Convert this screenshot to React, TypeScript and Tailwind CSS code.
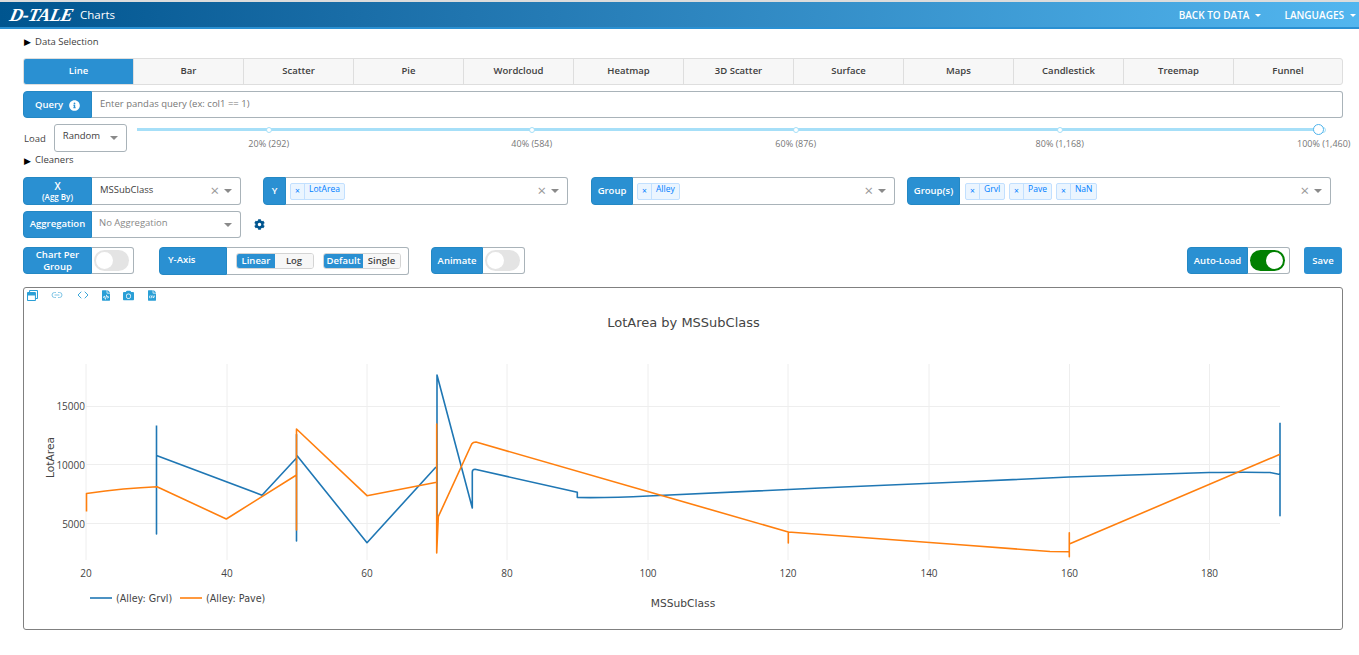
import React from "react";
import { FaCamera, FaCog, FaFileCode, FaFileCsv, FaInfoCircle, FaRegWindowRestore } from "react-icons/fa";
import { Code, Link2 } from "lucide-react";

const TABS = ["Line", "Bar", "Scatter", "Pie", "Wordcloud", "Heatmap", "3D Scatter", "Surface", "Maps", "Candlestick", "Treemap", "Funnel"];

const Caret = () => <span className="ml-[5px] h-0 w-0 border-x-[4px] border-t-[4px] border-x-transparent border-t-[#8a8a8a]" />;
const Clear = () => <span className="-mt-[2px] text-[15px] leading-none text-[#999]">×</span>;
const Label = ({ children, w, c = "pb-[1px]" }: { children: React.ReactNode; w: string; c?: string }) => (
  <div className={`${w} ${c} flex shrink-0 flex-col items-center justify-center rounded-l-[4px] border border-[#2488c4] bg-[#2a90d2] text-center text-[9.5px] font-semibold leading-[12px] text-white`}>{children}</div>
);
const Tag = ({ t }: { t: string }) => (
  <span className="flex h-[17px] items-center rounded-[2px] border border-[#c2e0ff] bg-[#ebf5ff] text-[8.5px] text-[#007eff]">
    <span className="flex h-full w-[14px] items-center justify-center border-r border-[#c2e0ff]">×</span>
    <span className="px-[4px] pb-[3px]">{t}</span>
  </span>
);
const Switch = ({ on }: { on?: boolean }) => (
  <div className={`flex h-[21px] w-[35px] items-center rounded-full ${on ? "justify-end bg-[#008000]" : "justify-start bg-[#e4e4e4]"} p-[2px]`}>
    <div className="h-[17px] w-[17px] rounded-full bg-white" />
  </div>
);
const Toggle = ({ items }: { items: string[] }) => (
  <div className="flex h-[16px] overflow-hidden rounded-[3px] border border-[#d4d4d4] text-[9.5px] font-semibold">
    {items.map((t, i) => (
      <span key={t} className={`flex items-center justify-center ${t === "Linear" ? "w-[38px]" : t === "Log" ? "w-[38px]" : t === "Default" ? "w-[39px]" : "w-[37px]"} ${i === 0 ? "bg-[#2a90d2] text-white" : "bg-[#f7f7f7] text-[#444]"}`}>{t}</span>
    ))}
  </div>
);

const Chart = () => {
  const xt = [[20, 86], [40, 227], [60, 367], [80, 507], [100, 648], [120, 788], [140, 929], [160, 1069.5], [180, 1209.5]];
  const f = "'DejaVu Sans', sans-serif";
  const n = "'Open Sans', sans-serif";
  return (
    <svg viewBox="23 287 1320 343" className="block h-[343px] w-[1320px]" style={{ fontFamily: f }}>
      {xt.map(([, x]) => <line key={x} x1={x} x2={x} y1={364} y2={560} stroke="#eeeeee" />)}
      {[406.5, 464.5, 523.5].map(y => <line key={y} x1={86} x2={1280} y1={y} y2={y} stroke="#eeeeee" />)}
      <path fill="none" stroke="#1f77b4" strokeWidth="1.6" strokeLinejoin="round" d="M156.5 425.5V534V455.5L262 495.2L296.5 458V434.5V541V455L367 542.7L436 467M437 540V375L472.3 508V472Q472.3 469.3 475 469.3L577.3 492.3V497.5Q610 498 648 496L820 488L960 482L1069 477L1209 472.5Q1250 472 1270 472.5L1280 474.5V515.7V422.7" />
      <path fill="none" stroke="#ff7f0e" strokeWidth="1.6" strokeLinejoin="round" d="M86.5 511.5V493.5Q125 488 157 486.7L226.3 519L296.5 475V530V429L367 495.7L436.7 482.3V424V553L438.3 516.7L471.7 444Q473 442 476 442L788.3 532V543V532L960 544.7L1050 551.5L1069.3 551.7V532.7V556.7V544L1280 454.3" />
      <text x={683.5} y={327} textAnchor="middle" fontSize="13" fill="#444">LotArea by MSSubClass</text>
      <g fontSize="10" fill="#444" style={{ fontFamily: n }}>
        {xt.map(([v, x]) => <text key={v} x={x} y={577} textAnchor="middle">{v}</text>)}
        <text x={85} y={410} textAnchor="end">15000</text>
        <text x={85} y={468.5} textAnchor="end">10000</text>
        <text x={85} y={527.5} textAnchor="end">5000</text>
      </g>
      <g fontSize="9.6" fill="#444">
        <text x={116} y={602}>(Alley: Grvl)</text>
        <text x={206} y={602}>(Alley: Pave)</text>
        <text transform="translate(54 457.5) rotate(-90)" textAnchor="middle" fontSize="10.7">LotArea</text>
        <text x={683} y={607} textAnchor="middle" fontSize="10.7">MSSubClass</text>
      </g>
      <line x1={90} x2={112} y1={598} y2={598} stroke="#1f77b4" strokeWidth="1.6" />
      <line x1={180} x2={202} y1={598} y2={598} stroke="#ff7f0e" strokeWidth="1.6" />
    </svg>
  );
};

export default function App() {
  return (
    <div className="h-[655px] w-[1359px] overflow-hidden bg-white text-[9.5px] text-[#404040]" style={{ fontFamily: "'Open Sans', sans-serif" }}>
      <div className="flex h-[29px] items-center border-b-[2px] border-t-[2px] border-b-[#2a90d2] border-t-[#dcdcdc] bg-gradient-to-r from-[#00558f] to-[#52b6ef] pl-[10px] pt-[1px] text-white">
        <span className="mr-[8px] w-[62px] -skew-x-12 whitespace-nowrap text-[18.5px] font-bold italic leading-none tracking-[-0.5px]" style={{ fontFamily: "'Liberation Serif', serif" }}>D-TALE</span>
        <span className="text-[11.5px]">Charts</span>
        <div className="ml-auto flex items-center pr-[3px] text-[10px] font-semibold">
          <span>BACK TO DATA</span>
          <span className="ml-[6px] h-0 w-0 border-x-[3px] border-t-[3px] border-x-transparent border-t-white" />
          <span className="ml-[23px]">LANGUAGES</span>
          <span className="ml-[6px] h-0 w-0 border-x-[3px] border-t-[3px] border-x-transparent border-t-white" />
        </div>
      </div>

      <div className="flex h-[29px] items-center pb-[3px] pl-[24px]"><span className="mr-[4px] text-[9px] text-black">▶</span>Data Selection</div>

      <div className="ml-[23px] flex h-[27px] w-[1320px] overflow-hidden rounded-[3px] border border-[#dedede] bg-[#f7f7f7] font-semibold">
        {TABS.map((t, i) => (
          <div key={t} className={`flex items-center justify-center ${i === 0 ? "bg-[#2a90d2] text-white" : "text-[#404040]"} ${i < 11 ? "w-[110px] border-r border-[#dedede]" : "flex-1"}`}>{t}</div>
        ))}
      </div>

      <div className="ml-[23px] mt-[6px] flex h-[27px] w-[1320px]">
        <Label w="w-[69px]" c="pt-[1px]"><span className="flex items-center gap-[6px]">Query <FaInfoCircle className="text-[11px]" /></span></Label>
        <div className="flex flex-1 items-center rounded-r-[3px] border border-l-0 border-[#a9b3b9] pl-[8px] text-[#777]">Enter pandas query (ex: col1 == 1)</div>
      </div>

      <div className="mt-[6px] flex h-[28px]">
        <span className="ml-[24px] mt-[8px] text-[#444]">Load</span>
        <div className="ml-[8px] flex h-[28px] w-[73px] items-center rounded-[3px] border border-[#a9b3b9] pb-[3px] pl-[8px]">Random<span className="ml-auto mr-[8px] flex items-center pt-[3px]"><Caret /></span></div>
        <div className="relative ml-[10px] w-[1186px]">
          <div className="mt-[4px] h-[3px] bg-[#a6dff8]" />
          {[132, 395, 659, 923, 1186].map(x => <span key={x} style={{ left: x - 3 }} className="absolute top-[2.5px] h-[6px] w-[6px] rounded-full border border-[#a6dff8] bg-white" />)}
          <span className="absolute left-[1176px] top-0 h-[11px] w-[11px] rounded-full border border-[#4fb3ec] bg-white" />
          {[["20% (292)", 132], ["40% (584)", 395], ["60% (876)", 659], ["80% (1,168)", 923], ["100% (1,460)", 1187]].map(([t, x]) => (
            <span key={t} style={{ left: x }} className="absolute top-[13px] -translate-x-1/2 whitespace-nowrap text-[9px] text-[#777]">{t}</span>
          ))}
        </div>
      </div>

      <div className="flex h-[25px] items-center pb-[8px] pl-[24px]"><span className="mr-[4px] text-[9px] text-black">▶</span>Cleaners</div>

      <div className="flex h-[28px]">
        <div className="ml-[23px] flex w-[218px]">
          <Label w="w-[69px]"><span className="text-[10px]">X</span><span className="text-[8px] leading-[10px]">(Agg By)</span></Label>
          <div className="flex flex-1 items-center rounded-r-[3px] border border-l-0 border-[#a9b3b9] pl-[8px] pr-[8px]"><span className="pb-[2px]">MSSubClass</span><span className="ml-auto flex items-center"><Clear /><Caret /></span></div>
        </div>
        <div className="ml-[22px] flex w-[305px]">
          <Label w="w-[23px]">Y</Label>
          <div className="flex flex-1 items-center gap-[4px] rounded-r-[3px] border border-l-0 border-[#a9b3b9] pl-[4px] pr-[8px]"><Tag t="LotArea" /><span className="ml-auto flex items-center"><Clear /><Caret /></span></div>
        </div>
        <div className="ml-[23px] flex w-[304px]">
          <Label w="w-[42px]">Group</Label>
          <div className="flex flex-1 items-center gap-[4px] rounded-r-[3px] border border-l-0 border-[#a9b3b9] pl-[4px] pr-[8px]"><Tag t="Alley" /><span className="ml-auto flex items-center"><Clear /><Caret /></span></div>
        </div>
        <div className="ml-[12px] flex w-[424px]">
          <Label w="w-[53px]">Group(s)</Label>
          <div className="flex flex-1 items-center gap-[4px] rounded-r-[3px] border border-l-0 border-[#a9b3b9] pl-[5px] pr-[8px]"><Tag t="Grvl" /><Tag t="Pave" /><Tag t="NaN" /><span className="ml-auto flex items-center"><Clear /><Caret /></span></div>
        </div>
      </div>

      <div className="mt-[6px] flex h-[27px] items-center">
        <div className="ml-[23px] flex h-full w-[218px]">
          <Label w="w-[69px]">Aggregation</Label>
          <div className="flex flex-1 items-center rounded-r-[3px] border border-l-0 border-[#a9b3b9] pl-[7px] pr-[8px] text-[#888]"><span className="pb-[3px]">No Aggregation</span><span className="ml-auto flex items-center"><Caret /></span></div>
        </div>
        <FaCog className="ml-[13px] text-[11px] text-[#00558f]" />
      </div>

      <div className="mt-[9px] flex h-[28px]">
        <div className="ml-[23px] flex h-[27px] w-[111px]">
          <Label w="w-[69px]" c="pt-[1px]"><span>Chart Per</span><span>Group</span></Label>
          <div className="flex flex-1 items-center rounded-r-[3px] border border-l-0 border-[#a9b3b9] pl-[2px]"><Switch /></div>
        </div>
        <div className="ml-[25px] flex w-[250px]">
          <div className="flex w-[68px] shrink-0 items-center rounded-l-[4px] border border-[#2488c4] bg-[#2a90d2] pb-[1px] pl-[8px] text-[9.5px] font-semibold text-white">Y-Axis</div>
          <div className="flex flex-1 items-center gap-[9px] rounded-r-[3px] border border-l-0 border-[#a9b3b9] pl-[9px]"><Toggle items={["Linear", "Log"]} /><Toggle items={["Default", "Single"]} /></div>
        </div>
        <div className="ml-[22px] flex h-[27px] w-[94px]">
          <Label w="w-[52px]" c="pt-[1px]">Animate</Label>
          <div className="flex flex-1 items-center rounded-r-[3px] border border-l-0 border-[#a9b3b9] pl-[2px]"><Switch /></div>
        </div>
        <div className="ml-[662px] flex h-[27px] w-[103px]">
          <Label w="w-[61px]" c="pt-[1px]">Auto-Load</Label>
          <div className="flex flex-1 items-center rounded-r-[3px] border border-l-0 border-[#a9b3b9] pl-[2px]"><Switch on /></div>
        </div>
        <div className="ml-[14px] flex h-[27px] w-[38px] items-center justify-center rounded-[3px] bg-[#2a90d2] pt-[1px] font-semibold text-white">Save</div>
      </div>

      <div className="relative ml-[23px] mt-[12px] h-[343px] w-[1320px] rounded-[3px] border border-[#808080]">
        <div className="absolute left-[2px] top-[1px] flex h-[12px] items-center text-[#2a9fd6]">
          <FaRegWindowRestore className="ml-[1px] h-[11px] w-[11px]" />
          <Link2 className="ml-[13px] h-[12px] w-[12px] opacity-60" strokeWidth={2} />
          <Code className="ml-[14px] h-[12px] w-[12px] opacity-90" strokeWidth={2} />
          <FaFileCode className="ml-[13px] h-[11px] w-[8px]" />
          <FaCamera className="ml-[13px] h-[11px] w-[11px]" />
          <FaFileCsv className="ml-[14px] h-[11px] w-[8px]" />
        </div>
        <div className="-m-px"><Chart /></div>
      </div>
    </div>
  );
}
